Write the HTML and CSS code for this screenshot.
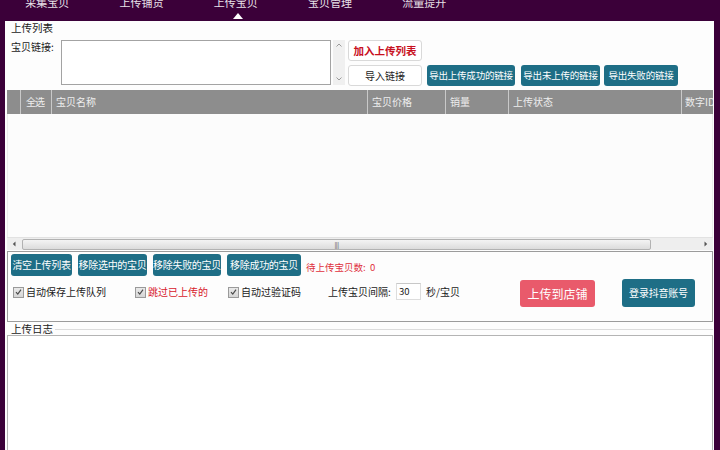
FILE: index.html
```html
<!DOCTYPE html>
<html lang="zh-CN">
<head>
<meta charset="utf-8">
<title>上传宝贝</title>
<link rel="stylesheet" href="styles.css">
</head>
<body>
<div class="app">
  <nav class="nav">
    <div class="nav-item"><span class="nav-text">采集宝贝</span></div>
    <div class="nav-item"><span class="nav-text">上传铺货</span></div>
    <div class="nav-item active"><span class="nav-text">上传宝贝</span><i class="nav-caret"></i></div>
    <div class="nav-item"><span class="nav-text">宝贝管理</span></div>
    <div class="nav-item"><span class="nav-text">流量提升</span></div>
  </nav>
  <div class="main">
    <div class="group-title">上传列表</div>
    <div class="link-row">
      <div class="link-label">宝贝链接:</div>
      <div class="link-input"></div>
      <div class="vscroll">
        <svg class="arrow" viewBox="0 0 6 4" width="6" height="4"><path d="M0.5 3.5 L3 1 L5.5 3.5" fill="none" stroke="#9a9a9a" stroke-width="1"/></svg>
        <svg class="arrow" viewBox="0 0 6 4" width="6" height="4"><path d="M0.5 0.5 L3 3 L5.5 0.5" fill="none" stroke="#9a9a9a" stroke-width="1"/></svg>
      </div>
      <div class="btn-col">
        <button class="btn-white btn-red">加入上传列表</button>
        <button class="btn-white">导入链接</button>
      </div>
      <div class="export-btns">
        <button class="btn-teal w88">导出上传成功的链接</button>
        <button class="btn-teal w79">导出未上传的链接</button>
        <button class="btn-teal w74">导出失败的链接</button>
      </div>
    </div>

    <div class="grid">
      <div class="grid-head">
        <div class="gh c1"></div>
        <div class="gh c2">全选</div>
        <div class="gh c3">宝贝名称</div>
        <div class="gh c4">宝贝价格</div>
        <div class="gh c5">销量</div>
        <div class="gh c6">上传状态</div>
        <div class="gh c7">数字ID</div>
      </div>
      <div class="grid-body"></div>
    </div>
    <div class="hscroll">
      <div class="hs-btn"><svg viewBox="0 0 4 6" width="4" height="6"><path d="M3.5 0.5 L0.8 3 L3.5 5.5 Z" fill="#555"/></svg></div>
      <div class="hs-thumb"><span class="grip">|||</span></div>
      <div class="hs-track"></div>
      <div class="hs-btn"><svg viewBox="0 0 4 6" width="4" height="6"><path d="M0.5 0.5 L3.2 3 L0.5 5.5 Z" fill="#555"/></svg></div>
    </div>

    <div class="options">
      <div class="opt-row1">
        <button class="btn-teal b61">清空上传列表</button>
        <button class="btn-teal b69">移除选中的宝贝</button>
        <button class="btn-teal b68">移除失败的宝贝</button>
        <button class="btn-teal b74">移除成功的宝贝</button>
        <span class="pending">待上传宝贝数:&nbsp;&nbsp;0</span>
      </div>
      <div class="opt-row2">
        <label class="cb-item o1"><span class="cb"><svg viewBox="0 0 10 10" width="10" height="10"><path d="M2.2 5.2 L4.2 7.4 L7.8 2.4" fill="none" stroke="#4a4a4a" stroke-width="1.3"/></svg></span>自动保存上传队列</label>
        <label class="cb-item o2 red"><span class="cb"><svg viewBox="0 0 10 10" width="10" height="10"><path d="M2.2 5.2 L4.2 7.4 L7.8 2.4" fill="none" stroke="#4a4a4a" stroke-width="1.3"/></svg></span>跳过已上传的</label>
        <label class="cb-item o3"><span class="cb"><svg viewBox="0 0 10 10" width="10" height="10"><path d="M2.2 5.2 L4.2 7.4 L7.8 2.4" fill="none" stroke="#4a4a4a" stroke-width="1.3"/></svg></span>自动过验证码</label>
        <span class="interval-label">上传宝贝间隔:</span>
        <span class="interval-input">30</span>
        <span class="interval-unit">秒/宝贝</span>
        <button class="btn-upload">上传到店铺</button>
        <button class="btn-teal btn-login">登录抖音账号</button>
      </div>
    </div>

    <div class="log-title"><span>上传日志</span><i class="log-line"></i></div>
    <div class="log-box"></div>
  </div>
</div>
</body>
</html>
```
FILE: styles.css
```css
* { box-sizing: border-box; }
html, body {
  margin: 0;
  padding: 0;
  background: #fdfdfd;
  font-family: "Noto Sans CJK SC", "Liberation Sans", sans-serif;
  font-size: 10px;
  color: #1a1a1a;
}
.app {
  width: 720px;
  height: 450px;
  display: flex;
  flex-direction: column;
}
.nav {
  height: 21px;
  display: flex;
  flex: none;
  overflow: hidden;
  background: #3b0039;
}
.nav-item {
  width: 94.3px;
  display: flex;
  flex-direction: column;
  align-items: center;
}
.nav-text {
  margin-top: -4px;
  font-size: 11px;
  line-height: 12px;
  color: #e8e0e8;
}
.nav-caret {
  margin-top: 5px;
  margin-left: 4px;
  width: 0;
  height: 0;
  border-left: 5px solid transparent;
  border-right: 5px solid transparent;
  border-bottom: 6px solid #ffffff;
}
.main {
  height: 429px;
  flex: none;
  border-left: 5px solid #3b0039;
  border-right: 6px solid #3b0039;
  background: #fdfdfd;
  padding: 0 1px 0 2px;
  display: flex;
  flex-direction: column;
}
.group-title {
  flex: none;
  margin-top: 1px;
  padding-left: 4px;
  font-size: 10.5px;
  line-height: 11px;
  height: 11px;
}
.link-row {
  flex: none;
  margin-top: 7px;
  height: 46px;
  display: flex;
  align-items: flex-start;
}
.link-label {
  width: 54px;
  padding-left: 4px;
  padding-top: 1px;
  line-height: 12px;
  font-size: 10px;
}
.link-input {
  width: 270px;
  height: 45px;
  border: 1px solid #a3a3a3;
  background: #fff;
}
.vscroll {
  margin-left: 2px;
  width: 12px;
  height: 45px;
  background: #f0f0f0;
  display: flex;
  flex-direction: column;
  justify-content: space-between;
  align-items: center;
  padding: 3px 0 4px;
}
.arrow { display: block; }
.btn-col {
  margin-left: 3px;
  width: 74px;
  display: flex;
  flex-direction: column;
  gap: 4px;
}
button {
  font-family: "Noto Sans CJK SC", "Liberation Sans", sans-serif;
  margin: 0;
  padding: 0;
  cursor: pointer;
  white-space: nowrap;
  overflow: hidden;
}
.btn-white {
  height: 21px;
  width: 74px;
  background: #fff;
  border: 1px solid #d9d9d9;
  border-radius: 3px;
  font-size: 10px;
  line-height: 19px;
  color: #1a1a1a;
}
.btn-red {
  color: #c8101e;
  font-weight: bold;
  font-size: 10.5px;
}
.export-btns {
  margin-left: 5px;
  margin-top: 25px;
  display: flex;
}
.btn-teal {
  background: #1e6e86;
  color: #ffffff;
  border: none;
  border-radius: 3px;
  font-size: 9.5px;
  line-height: 21px;
  height: 21px;
  letter-spacing: -0.2px;
}
.w88 { width: 88px; }
.w79 { width: 79px; margin-left: 6px; }
.w74 { width: 74px; margin-left: 4px; }

.grid {
  flex: none;
  margin-top: 4px;
  display: flex;
  flex-direction: column;
}
.grid-head {
  display: flex;
  height: 24px;
  background: #8d8d8d;
}
.gh {
  height: 24px;
  padding-left: 4px;
  border-right: 1px solid #c9c9c9;
  color: #eeeeee;
  font-size: 10px;
  line-height: 24px;
  white-space: nowrap;
  overflow: hidden;
}
.c1 { width: 14px; }
.c2 { width: 31px; padding-left: 5px; letter-spacing: -1px; }
.c3 { width: 316px; }
.c4 { width: 78px; }
.c5 { width: 63px; }
.c6 { width: 173px; }
.c7 { flex: 1; border-right: none; padding-left: 3px; }
.grid-body {
  height: 123px;
  background: #fcfcfc;
  border-left: 1px solid #ececec;
  border-right: 1px solid #ececec;
}
.hscroll {
  flex: none;
  height: 13px;
  display: flex;
  align-items: center;
  background: #eeeeee;
  border-top: 1px solid #e2e2e2;
}
.hs-btn {
  width: 14px;
  height: 12px;
  display: flex;
  align-items: center;
  justify-content: center;
}
.hs-thumb {
  width: 629px;
  height: 11px;
  margin-left: 1px;
  border: 1px solid #b2b2b2;
  border-radius: 2px;
  background: linear-gradient(#f4f4f4, #dcdcdc);
  display: flex;
  align-items: center;
  justify-content: center;
}
.grip {
  font-size: 7px;
  line-height: 7px;
  color: #777;
  letter-spacing: -0.5px;
  font-family: "Liberation Sans", sans-serif;
}
.hs-track { flex: 1; }

.options {
  flex: none;
  margin-top: 1px;
  height: 71px;
  border: 1px solid #9c9c9c;
  padding: 2px 3px 0 3px;
}
.opt-row1 {
  display: flex;
  align-items: center;
  height: 22px;
}
.opt-row1 .btn-teal {
  height: 22px;
  line-height: 22px;
  font-size: 10px;
  letter-spacing: -0.3px;
}
.b61 { width: 61px; }
.b69 { width: 69px; margin-left: 6px; }
.b68 { width: 68px; margin-left: 6px; }
.b74 { width: 74px; margin-left: 6px; }
.pending {
  margin-left: 5px;
  padding-top: 4px;
  color: #e0303c;
  font-size: 9.5px;
  line-height: 12px;
  white-space: nowrap;
}
.opt-row2 {
  margin-top: 3px;
  height: 28px;
  display: flex;
  align-items: center;
}
.cb-item {
  display: flex;
  align-items: center;
  font-size: 10px;
  line-height: 12px;
  white-space: nowrap;
  margin-top: -2px;
}
.cb {
  width: 11px;
  height: 11px;
  border: 1px solid #9a9a9a;
  background: linear-gradient(#e9e9e9, #d6d6d6);
  margin-right: 2px;
  display: flex;
  align-items: center;
  justify-content: center;
}
.cb svg { display: block; }
.o1 { width: 122px; margin-left: 2px; }
.o2 { width: 93px; }
.o3 { width: 100px; }
.red { color: #d8202c; }
.interval-label {
  width: 68px;
  font-size: 10px;
  line-height: 12px;
  white-space: nowrap;
  margin-top: -2px;
}
.interval-input {
  width: 25px;
  height: 17px;
  border: 1px solid #dddddd;
  border-top-color: #c8c8c8;
  background: #fff;
  font-size: 9.5px;
  line-height: 14px;
  padding-left: 2px;
  margin-top: -3px;
}
.interval-unit {
  width: 99px;
  padding-left: 5px;
  font-size: 10px;
  line-height: 12px;
  margin-top: -2px;
}
.btn-upload {
  width: 75px;
  height: 27px;
  background: #e95a6b;
  border: none;
  border-radius: 3px;
  color: #fff;
  font-size: 12px;
  line-height: 27px;
}
.btn-login {
  margin-left: 27px;
  width: 73px;
  height: 28px;
  line-height: 28px;
  font-size: 10px;
}

.log-title {
  flex: none;
  height: 13px;
  display: flex;
  align-items: center;
  padding-left: 4px;
  font-size: 10.5px;
  line-height: 12px;
}
.log-line {
  flex: 1;
  height: 1px;
  background: #dcdcdc;
  margin-left: 2px;
  margin-top: 2px;
}
.log-box {
  flex: 1;
  border: 1px solid #b4b4b4;
  border-bottom: none;
  background: #ffffff;
}
```
